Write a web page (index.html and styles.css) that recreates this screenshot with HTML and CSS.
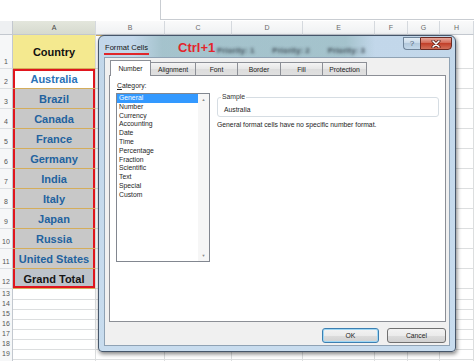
FILE: index.html
```html
<!DOCTYPE html>
<html lang="en">
<head>
  <meta charset="UTF-8" />
  <meta name="viewport" content="width=device-width, initial-scale=1.0"/>
  <title>Format Cells - Ctrl+1</title>
  <link rel="stylesheet" href="styles.css">
</head>
<body>

  <div class="sheet">
    <div class="formula-bar"><div class="formula-box"></div></div>

    <div class="row head">
      <div class="corner"></div>
      <div class="col col-a">A</div>
      <div class="col">B</div>
      <div class="col">C</div>
      <div class="col">D</div>
      <div class="col">E</div>
      <div class="col">F</div>
      <div class="col">G</div>
      <div class="col">H</div>
    </div>

    <div class="row tall">
      <div class="rh">1</div>
      <div class="cell country">Country</div>
      <div class="cell gold"></div><div class="cell gold"></div><div class="cell gold"></div><div class="cell gold"></div>
      <div class="cell"></div><div class="cell"></div><div class="cell"></div>
    </div>
    <div class="row">
      <div class="rh">2</div>
      <div class="cell name first">Australia</div>
      <div class="cell"></div><div class="cell"></div><div class="cell"></div><div class="cell"></div><div class="cell"></div><div class="cell"></div><div class="cell"></div>
    </div>
    <div class="row">
      <div class="rh">3</div>
      <div class="cell name">Brazil</div>
      <div class="cell"></div><div class="cell"></div><div class="cell"></div><div class="cell"></div><div class="cell"></div><div class="cell"></div><div class="cell"></div>
    </div>
    <div class="row">
      <div class="rh">4</div>
      <div class="cell name">Canada</div>
      <div class="cell"></div><div class="cell"></div><div class="cell"></div><div class="cell"></div><div class="cell"></div><div class="cell"></div><div class="cell"></div>
    </div>
    <div class="row">
      <div class="rh">5</div>
      <div class="cell name">France</div>
      <div class="cell"></div><div class="cell"></div><div class="cell"></div><div class="cell"></div><div class="cell"></div><div class="cell"></div><div class="cell"></div>
    </div>
    <div class="row">
      <div class="rh">6</div>
      <div class="cell name">Germany</div>
      <div class="cell"></div><div class="cell"></div><div class="cell"></div><div class="cell"></div><div class="cell"></div><div class="cell"></div><div class="cell"></div>
    </div>
    <div class="row">
      <div class="rh">7</div>
      <div class="cell name">India</div>
      <div class="cell"></div><div class="cell"></div><div class="cell"></div><div class="cell"></div><div class="cell"></div><div class="cell"></div><div class="cell"></div>
    </div>
    <div class="row">
      <div class="rh">8</div>
      <div class="cell name">Italy</div>
      <div class="cell"></div><div class="cell"></div><div class="cell"></div><div class="cell"></div><div class="cell"></div><div class="cell"></div><div class="cell"></div>
    </div>
    <div class="row">
      <div class="rh">9</div>
      <div class="cell name">Japan</div>
      <div class="cell"></div><div class="cell"></div><div class="cell"></div><div class="cell"></div><div class="cell"></div><div class="cell"></div><div class="cell"></div>
    </div>
    <div class="row">
      <div class="rh">10</div>
      <div class="cell name">Russia</div>
      <div class="cell"></div><div class="cell"></div><div class="cell"></div><div class="cell"></div><div class="cell"></div><div class="cell"></div><div class="cell"></div>
    </div>
    <div class="row">
      <div class="rh">11</div>
      <div class="cell name">United States</div>
      <div class="cell"></div><div class="cell"></div><div class="cell"></div><div class="cell"></div><div class="cell"></div><div class="cell"></div><div class="cell"></div>
    </div>
    <div class="row">
      <div class="rh">12</div>
      <div class="cell name total">Grand Total</div>
      <div class="cell"></div><div class="cell"></div><div class="cell"></div><div class="cell"></div><div class="cell"></div><div class="cell"></div><div class="cell"></div>
    </div>
    <div class="row small">
      <div class="rh">13</div>
      <div class="cell"></div><div class="cell"></div><div class="cell"></div><div class="cell"></div><div class="cell"></div><div class="cell"></div><div class="cell"></div><div class="cell"></div>
    </div>
    <div class="row small">
      <div class="rh">14</div>
      <div class="cell"></div><div class="cell"></div><div class="cell"></div><div class="cell"></div><div class="cell"></div><div class="cell"></div><div class="cell"></div><div class="cell"></div>
    </div>
    <div class="row small">
      <div class="rh">15</div>
      <div class="cell"></div><div class="cell"></div><div class="cell"></div><div class="cell"></div><div class="cell"></div><div class="cell"></div><div class="cell"></div><div class="cell"></div>
    </div>
    <div class="row small">
      <div class="rh">16</div>
      <div class="cell"></div><div class="cell"></div><div class="cell"></div><div class="cell"></div><div class="cell"></div><div class="cell"></div><div class="cell"></div><div class="cell"></div>
    </div>
    <div class="row small">
      <div class="rh">17</div>
      <div class="cell"></div><div class="cell"></div><div class="cell"></div><div class="cell"></div><div class="cell"></div><div class="cell"></div><div class="cell"></div><div class="cell"></div>
    </div>
    <div class="row small">
      <div class="rh">18</div>
      <div class="cell"></div><div class="cell"></div><div class="cell"></div><div class="cell"></div><div class="cell"></div><div class="cell"></div><div class="cell"></div><div class="cell"></div>
    </div>
    <div class="row small">
      <div class="rh">19</div>
      <div class="cell"></div><div class="cell"></div><div class="cell"></div><div class="cell"></div><div class="cell"></div><div class="cell"></div><div class="cell"></div><div class="cell"></div>
    </div>
    <div class="row small">
      <div class="rh"></div>
      <div class="cell"></div><div class="cell"></div><div class="cell"></div><div class="cell"></div><div class="cell"></div><div class="cell"></div><div class="cell"></div><div class="cell"></div>
    </div>
  </div>

  <div class="dialog">
    <div class="titlebar">
      <div class="glass">
        <span>Priority: 1</span>
        <span>Priority: 2</span>
        <span>Priority: 3</span>
      </div>
      <span class="title">Format Cells</span>
      <span class="ctrl">Ctrl+1</span>
      <div class="caption-btns">
        <div class="help">?</div>
        <div class="close">
          <svg width="10" height="8" viewBox="0 0 10 8"><path d="M2 1 L8 7 M8 1 L2 7" stroke="#4a1410" stroke-width="3" stroke-linecap="round"/><path d="M2 1 L8 7 M8 1 L2 7" stroke="#fff" stroke-width="1.6" stroke-linecap="round"/></svg>
        </div>
      </div>
    </div>

    <div class="client">
      <div class="tabs">
        <div class="tab active" style="width: 41px">Number</div>
        <div class="tab" style="width: 46px">Alignment</div>
        <div class="tab" style="width: 43px">Font</div>
        <div class="tab" style="width: 44px">Border</div>
        <div class="tab" style="width: 43px">Fill</div>
        <div class="tab" style="width: 45px">Protection</div>
      </div>

      <div class="panel">
        <div class="category">
          <div class="label"><u>C</u>ategory:</div>
          <div class="listbox">
            <div class="items">
              <div class="item selected">General</div>
              <div class="item">Number</div>
              <div class="item">Currency</div>
              <div class="item">Accounting</div>
              <div class="item">Date</div>
              <div class="item">Time</div>
              <div class="item">Percentage</div>
              <div class="item">Fraction</div>
              <div class="item">Scientific</div>
              <div class="item">Text</div>
              <div class="item">Special</div>
              <div class="item">Custom</div>
            </div>
            <div class="scroll">
              <span>&#9650;</span>
              <span>&#9660;</span>
            </div>
          </div>
        </div>

        <div class="details">
          <fieldset class="sample">
            <legend>Sample</legend>
            <div class="sample-value">Australia</div>
          </fieldset>
          <p class="desc">General format cells have no specific number format.</p>
        </div>
      </div>

      <div class="buttons">
        <button class="btn default">OK</button>
        <button class="btn cancel">Cancel</button>
      </div>
    </div>
  </div>

</body>
</html>
```

FILE: styles.css
```css
body {
  margin: 0;
  width: 474px;
  height: 361px;
  overflow: hidden;
  background: #fff;
  font-family: 'Liberation Sans', Arial, sans-serif;
}

/* ---------- sheet ---------- */

.formula-bar {
  height: 21px;
}

.formula-box {
  margin-left: 160px;
  height: 19px;
  border-left: 1px solid #c9cdd2;
  border-bottom: 1px solid #c9cdd2;
}

.row {
  display: grid;
  grid-template-columns: 13px 83px 69px 67px 71px 72px 33px 32px 34px;
  height: 20px;
}

.row.head {
  height: 14px;
}

.row.tall {
  height: 34px;
}

.row.small {
  height: 10px;
}

.row > div {
  box-sizing: border-box;
}

.corner {
  background: #eef0f2;
  border-right: 1px solid #c3c8cf;
  border-bottom: 1px solid #c3c8cf;
}

.col {
  background: linear-gradient(#fafafa, #eff1f3);
  border-right: 1px solid #d5d9de;
  border-bottom: 1px solid #c3c8cf;
  font-size: 7px;
  color: #6a6a6a;
  display: flex;
  align-items: center;
  justify-content: center;
}

.col-a {
  background: linear-gradient(#e3e6dc, #d6dacf);
  color: #444;
}

.rh {
  background: #f6f7f8;
  border-right: 1px solid #c3c8cf;
  border-bottom: 1px solid #dcdfe3;
  font-size: 7px;
  color: #555;
  display: flex;
  align-items: flex-end;
  justify-content: center;
  padding-bottom: 3px;
}

.small .rh {
  padding-bottom: 1px;
  align-items: center;
  line-height: 9px;
}

.cell {
  border-right: 1px solid #dcdedf;
  border-bottom: 1px solid #dcdedf;
}

.cell.gold {
  border-top: 1px solid #c9a85e;
}

.country {
  background: #f4e98f;
  border-bottom: 1px solid #d4ad5c;
  font: bold 11px 'Liberation Sans', Arial, sans-serif;
  color: #111;
  display: flex;
  align-items: center;
  justify-content: center;
  padding-top: 1px;
}

.name {
  background: #c8c8c8;
  border-bottom: 1px solid #d4ad5c !important;
  font: bold 11px 'Liberation Sans', Arial, sans-serif;
  color: #22629f;
  display: flex;
  align-items: center;
  justify-content: center;
  box-shadow: inset 2px 0 #e0161e, inset -2px 0 #e0161e;
}

.name.first {
  background: #fff;
  color: #2a72b8;
  box-shadow: inset 2px 0 #e0161e, inset -2px 0 #e0161e, inset 0 2px #e0161e;
}

.name.total {
  background: #bdc3ca;
  color: #151515;
  box-shadow: inset 2px 0 #e0161e, inset -2px 0 #e0161e, inset 0 -2px #e0161e;
}

/* ---------- dialog ---------- */

.dialog {
  position: absolute;
  left: 98px;
  top: 35px;
  width: 358px;
  height: 317px;
  box-sizing: border-box;
  border: 1px solid #46566a;
  border-radius: 6px 6px 4px 4px;
  padding: 0 5px 5px;
  background: linear-gradient(#c2d7ea, #c8dcee);
  box-shadow: 1px 2px 4px rgba(0, 0, 0, 0.5);
  display: flex;
  flex-direction: column;
  font-size: 6.8px;
  color: #1e1e1e;
}

.titlebar {
  height: 21px;
  margin-right: -2px;
  display: flex;
  align-items: center;
  position: relative;
}

.glass {
  position: absolute;
  left: 29px;
  top: 0;
  width: 242px;
  height: 21px;
  background: linear-gradient(to right, rgba(140, 178, 180, 0), rgba(140, 178, 180, 0.55) 12%, rgba(140, 178, 180, 0.55) 88%, rgba(140, 178, 180, 0));
  display: flex;
  align-items: center;
  gap: 18px;
  padding-left: 84px;
  box-sizing: border-box;
}

.glass span {
  font-size: 8px;
  font-weight: bold;
  color: transparent;
  text-shadow: 0 0 3px rgba(40, 50, 60, 0.8);
  margin-top: 7px;
}

.title {
  position: relative;
  font-size: 7.6px;
  color: #141414;
  padding: 0 1px 1px;
  border-bottom: 2px solid #e0262b;
  margin-top: 4px;
}

.ctrl {
  position: relative;
  margin-left: 29px;
  font: bold 13px 'Liberation Sans', Arial, sans-serif;
  color: #e3242b;
  margin-top: 1px;
}

.caption-btns {
  margin-left: auto;
  align-self: flex-start;
  margin-top: 1px;
  display: flex;
  position: relative;
}

.help {
  width: 17px;
  height: 13px;
  box-sizing: border-box;
  border: 1px solid #6f8499;
  border-right: none;
  border-radius: 0 0 0 4px;
  background: linear-gradient(#e4eef6, #c6d8e8 50%, #b3c9dc 50%, #c4d8ea);
  color: #52657a;
  font-size: 8px;
  line-height: 11px;
  text-align: center;
}

.close {
  width: 32px;
  height: 13px;
  box-sizing: border-box;
  border: 1px solid #6b2a22;
  border-radius: 0 0 4px 0;
  background: linear-gradient(#e9a99c, #d0614d 50%, #c2402a 50%, #d2705a);
  display: flex;
  align-items: center;
  justify-content: center;
}

.client {
  flex: 1;
  background: #f0f0f0;
  border: 1px solid #8fa2b4;
  padding: 2px 3px 0 4px;
  display: flex;
  flex-direction: column;
}

.tabs {
  display: flex;
  align-items: flex-end;
  height: 16px;
  margin-bottom: -1px;
  padding-left: 1px;
  position: relative;
  z-index: 1;
}

.tab {
  height: 13px;
  margin-bottom: 1px;
  margin-left: -1px;
  box-sizing: border-box;
  border: 1px solid #8c8f96;
  border-bottom: none;
  background: linear-gradient(#f4f4f4, #e6e6e6 50%, #dcdcdc 50%, #e0e0e0);
  display: flex;
  align-items: center;
  justify-content: center;
  color: #222;
}

.tab:first-child {
  margin-left: 0;
}

.tab.active {
  height: 16px;
  margin-bottom: 0;
  background: #fff;
  padding-bottom: 1px;
  position: relative;
  z-index: 1;
}

.panel {
  height: 247px;
  box-sizing: border-box;
  border: 1px solid #8c8f96;
  background: #fff;
  padding: 6px;
  display: flex;
  gap: 7px;
}

.category {
  width: 94px;
}

.label {
  line-height: 8px;
  padding-left: 1px;
}

.label u {
  text-decoration-thickness: 0.5px;
}

.listbox {
  margin-top: 3px;
  height: 169px;
  box-sizing: border-box;
  border: 1px solid #828790;
  display: flex;
}

.items {
  flex: 1;
}

.item {
  line-height: 8.8px;
  padding-left: 2px;
}

.item.selected {
  background: #3399ff;
  color: #fff;
}

.scroll {
  width: 11px;
  background: #f6f6f6;
  display: flex;
  flex-direction: column;
  justify-content: space-between;
  align-items: center;
  font-size: 4px;
  color: #8a8a8a;
  padding: 3px 0;
}

.details {
  flex: 1;
  padding-top: 11px;
}

.sample {
  margin: 0;
  padding: 4px 4px 2px 3px;
  border: 1px solid #d6dde3;
  border-radius: 3px;
}

.sample legend {
  padding: 0 1px;
  line-height: 8px;
  color: #333;
}

.sample-value {
  line-height: 9px;
  padding-left: 3px;
}

.desc {
  margin: 4px 0 0;
  line-height: 8px;
}

.buttons {
  display: flex;
  justify-content: flex-end;
  gap: 8px;
  margin-top: 6px;
}

.btn {
  height: 15px;
  padding: 0;
  border: 1px solid #707070;
  border-radius: 3px;
  background: linear-gradient(#f3f3f3, #ebebeb 50%, #dddddd 50%, #d1d1d1);
  font: 6.8px 'Liberation Sans', Arial, sans-serif;
  color: #1e1e1e;
}

.btn.default {
  width: 57px;
  border-color: #3c7fb1;
  box-shadow: inset 0 0 0 1px #9fd7f4;
}

.btn.cancel {
  width: 59px;
}
```
